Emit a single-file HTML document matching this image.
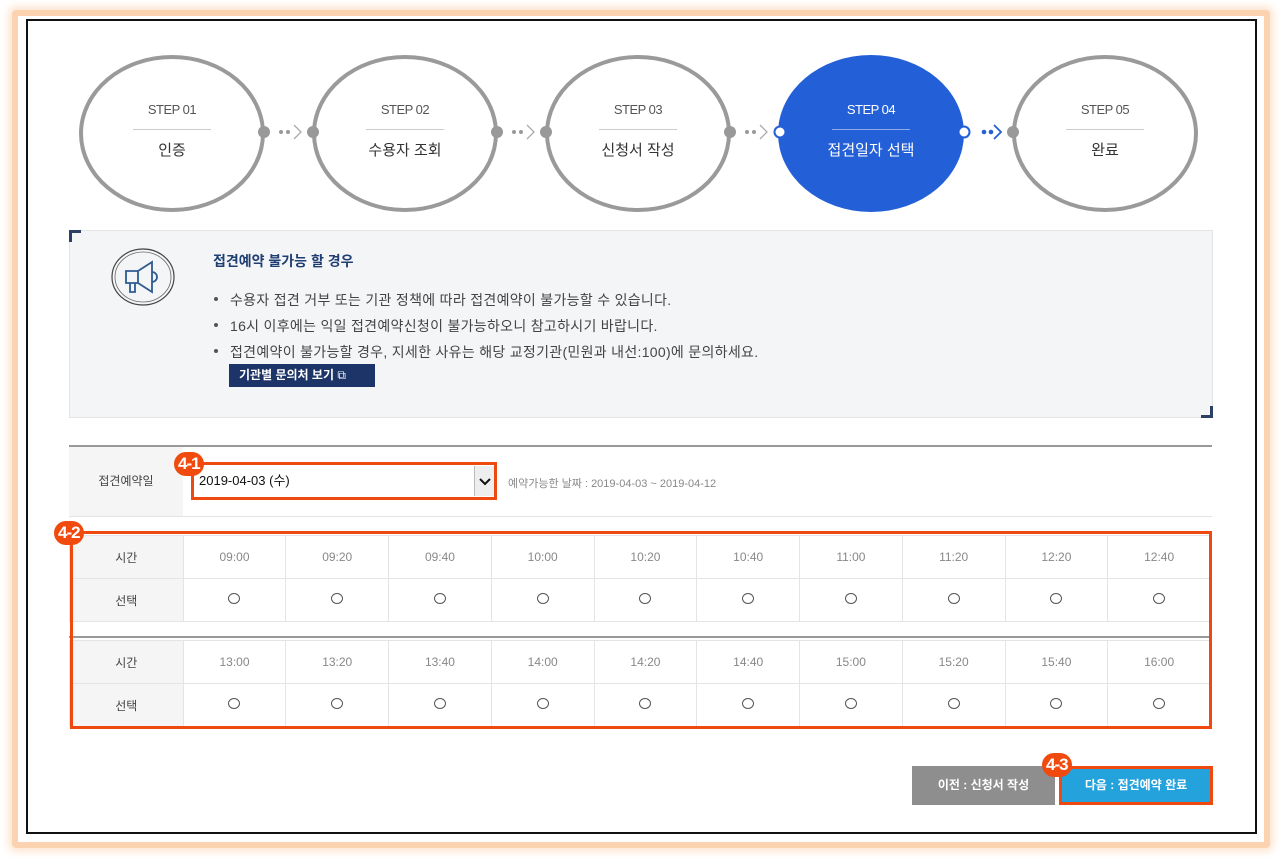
<!DOCTYPE html>
<html><head><meta charset="utf-8"><style>
*{margin:0;padding:0;box-sizing:border-box}
body{width:1280px;height:859px;background:#fff;position:relative;overflow:hidden;font-family:"Liberation Sans","Noto Sans CJK KR",sans-serif;color:#333}
.glow{position:absolute;left:12px;top:10px;width:1258px;height:838px;border:6px solid #fcd3b0;box-shadow:0 0 8px 4px #fde6d2;border-radius:4px}
.frame{position:absolute;left:26px;top:19px;width:1231px;height:815px;border:2px solid #111;background:#fff}
.a{position:absolute}
.c{position:absolute;width:186px;height:157px;border:4px solid #9a9a9a;border-radius:50%;text-align:center}
.c .s{position:absolute;top:43px;left:0;right:0;font-size:13px;color:#555;letter-spacing:-0.5px}
.c .l{position:absolute;top:70px;left:50px;right:50px;border-top:1px solid #ccc}
.c .t{position:absolute;top:80px;left:0;right:0;font-size:15px;color:#333}
.c.on{background:#2360d8;border-color:#2360d8}
.c.on .s,.c.on .t{color:#fff}.c.on .l{border-color:#8fa9ea}
.notes{position:absolute;left:214px;top:290px;list-style:none}
.notes li{font-size:14px;color:#444;position:relative;padding-left:16px;height:26px;letter-spacing:0.3px;white-space:nowrap}
.notes li:before{content:"";position:absolute;left:0;top:7px;width:4px;height:4px;border-radius:50%;background:#555}
table{border-collapse:collapse;position:absolute;left:69px;width:1142px;font-size:12px;color:#888}
td{border:1px solid #e4e4e4;height:43px;text-align:center;width:103px}
td.h{width:114px;background:#f5f5f5;color:#444;font-size:12px}
.r{display:inline-block;width:12px;height:11px;border:1px solid #555;border-radius:50%}
.badge{position:absolute;height:24px;padding:0 4px;border-radius:12px;background:#f04a0f;color:#fff;font-weight:bold;font-size:17px;line-height:24px;letter-spacing:-1px}
</style></head><body>
<div class="glow"></div>
<div class="frame"></div>

<div class="c" style="left:79px;top:55px"><div class="s">STEP 01</div><div class="l"></div><div class="t">인증</div></div>
<div class="c" style="left:312px;top:55px"><div class="s">STEP 02</div><div class="l"></div><div class="t">수용자 조회</div></div>
<div class="c" style="left:545px;top:55px"><div class="s">STEP 03</div><div class="l"></div><div class="t">신청서 작성</div></div>
<div class="c on" style="left:778px;top:55px"><div class="s">STEP 04</div><div class="l"></div><div class="t">접견일자 선택</div></div>
<div class="c" style="left:1012px;top:55px"><div class="s">STEP 05</div><div class="l"></div><div class="t">완료</div></div>

<svg class="a" style="left:0;top:0" width="1280" height="200">
<g fill="#999"><circle cx="264" cy="132" r="6"/><circle cx="313" cy="132" r="6"/><circle cx="497" cy="132" r="6"/><circle cx="546" cy="132" r="6"/><circle cx="730" cy="132" r="6"/><circle cx="1013" cy="132" r="6"/>
<circle cx="281" cy="132" r="2"/><circle cx="288" cy="132" r="2"/><circle cx="514" cy="132" r="2"/><circle cx="521" cy="132" r="2"/><circle cx="747" cy="132" r="2"/><circle cx="754" cy="132" r="2"/></g>
<g fill="none" stroke="#aaa" stroke-width="1.3"><path d="M294 125l7 7-7 7M527 125l7 7-7 7M760 125l7 7-7 7"/></g>
<g fill="#2360d8"><circle cx="984" cy="132" r="2.3"/><circle cx="991" cy="132" r="2.3"/></g>
<path d="M994 125l7 7-7 7" fill="none" stroke="#2360d8" stroke-width="1.8"/>
<circle cx="780" cy="132" r="5.5" fill="#fff" stroke="#2360d8" stroke-width="2"/><circle cx="964" cy="132" r="5.5" fill="#fff" stroke="#2360d8" stroke-width="2"/>
</svg>

<div class="a" style="left:69px;top:230px;width:1144px;height:188px;background:#f4f5f6;border:1px solid #e3e4e6"></div>
<div class="a" style="left:69px;top:230px;width:12px;height:12px;border-left:3px solid #2d3f63;border-top:3px solid #2d3f63"></div>
<div class="a" style="left:1201px;top:406px;width:12px;height:12px;border-right:3px solid #2d3f63;border-bottom:3px solid #2d3f63"></div>
<svg class="a" style="left:110px;top:247px" width="66" height="60" viewBox="0 0 66 60"><ellipse cx="33" cy="30" rx="31" ry="28" fill="none" stroke="#444" stroke-width="1.2"/><ellipse cx="33" cy="30" rx="28" ry="25" fill="none" stroke="#666" stroke-width="0.8"/><g fill="none" stroke="#2d5b92" stroke-width="1.8"><path d="M16 24h12v12H16zM28 24l14-9v30l-14-9M42 25a5 5 0 0 1 0 10M20 36v9h5v-9"/></g></svg>
<div class="a" style="left:213px;top:251px;font-size:14px;color:#1f3e73;font-weight:bold">접견예약 불가능 할 경우</div>
<ul class="notes">
<li>수용자 접견 거부 또는 기관 정책에 따라 접견예약이 불가능할 수 있습니다.</li>
<li>16시 이후에는 익일 접견예약신청이 불가능하오니 참고하시기 바랍니다.</li>
<li>접견예약이 불가능할 경우, 지세한 사유는 해당 교정기관(민원과 내선:100)에 문의하세요.</li>
</ul>
<div class="a" style="left:229px;top:364px;width:146px;height:23px;background:#1c3468;color:#fff;font-size:12px;font-weight:bold;line-height:23px;padding-left:10px">기관별 문의처 보기 <span style="font-weight:normal">⧉</span></div>

<div class="a" style="left:69px;top:445px;width:1143px;border-top:2px solid #999"></div>
<div class="a" style="left:69px;top:447px;width:114px;height:69px;background:#f5f5f5;font-size:12px;color:#444;text-align:center;line-height:69px">접견예약일</div>
<div class="a" style="left:69px;top:516px;width:1143px;border-top:1px solid #e4e4e4"></div>
<div class="a" style="left:191px;top:462px;width:306px;height:38px;border:3px solid #ee4a10;background:#fff;font-size:13px;color:#111;line-height:32px;padding-left:5px">2019-04-03 (수)</div>
<div class="a" style="left:474px;top:466px;width:20px;height:30px;background:#eee;border-left:1px solid #bbb"><svg width="20" height="30"><path d="M5 13l5 5 5-5" fill="none" stroke="#111" stroke-width="2"/></svg></div>
<div class="a" style="left:508px;top:475px;font-size:11px;color:#888">예약가능한 날짜 : 2019-04-03 ~ 2019-04-12</div>
<div class="badge" style="left:174px;top:452px">4-1</div>

<table style="top:535px">
<tr><td class="h">시간</td><td>09:00</td><td>09:20</td><td>09:40</td><td>10:00</td><td>10:20</td><td>10:40</td><td>11:00</td><td>11:20</td><td>12:20</td><td>12:40</td></tr>
<tr><td class="h">선택</td><td><span class="r"></span></td><td><span class="r"></span></td><td><span class="r"></span></td><td><span class="r"></span></td><td><span class="r"></span></td><td><span class="r"></span></td><td><span class="r"></span></td><td><span class="r"></span></td><td><span class="r"></span></td><td><span class="r"></span></td></tr>
</table>
<div class="a" style="left:69px;top:636px;width:1143px;border-top:2px solid #999"></div>
<table style="top:640px">
<tr><td class="h">시간</td><td>13:00</td><td>13:20</td><td>13:40</td><td>14:00</td><td>14:20</td><td>14:40</td><td>15:00</td><td>15:20</td><td>15:40</td><td>16:00</td></tr>
<tr><td class="h">선택</td><td><span class="r"></span></td><td><span class="r"></span></td><td><span class="r"></span></td><td><span class="r"></span></td><td><span class="r"></span></td><td><span class="r"></span></td><td><span class="r"></span></td><td><span class="r"></span></td><td><span class="r"></span></td><td><span class="r"></span></td></tr>
</table>
<div class="a" style="left:70px;top:531px;width:1142px;height:198px;border:3px solid #ee4a10"></div>
<div class="badge" style="left:54px;top:521px">4-2</div>

<div class="a" style="left:912px;top:766px;width:143px;height:39px;background:#8e8e8e;color:#fff;font-size:12px;font-weight:bold;text-align:center;line-height:39px">이전 : 신청서 작성</div>
<div class="a" style="left:1059px;top:766px;width:154px;height:39px;background:#24a2dc;border:3px solid #ee4a10;color:#fff;font-size:12px;font-weight:bold;text-align:center;line-height:33px">다음 : 접견예약 완료</div>
<div class="badge" style="left:1042px;top:753px">4-3</div>
</body></html>
